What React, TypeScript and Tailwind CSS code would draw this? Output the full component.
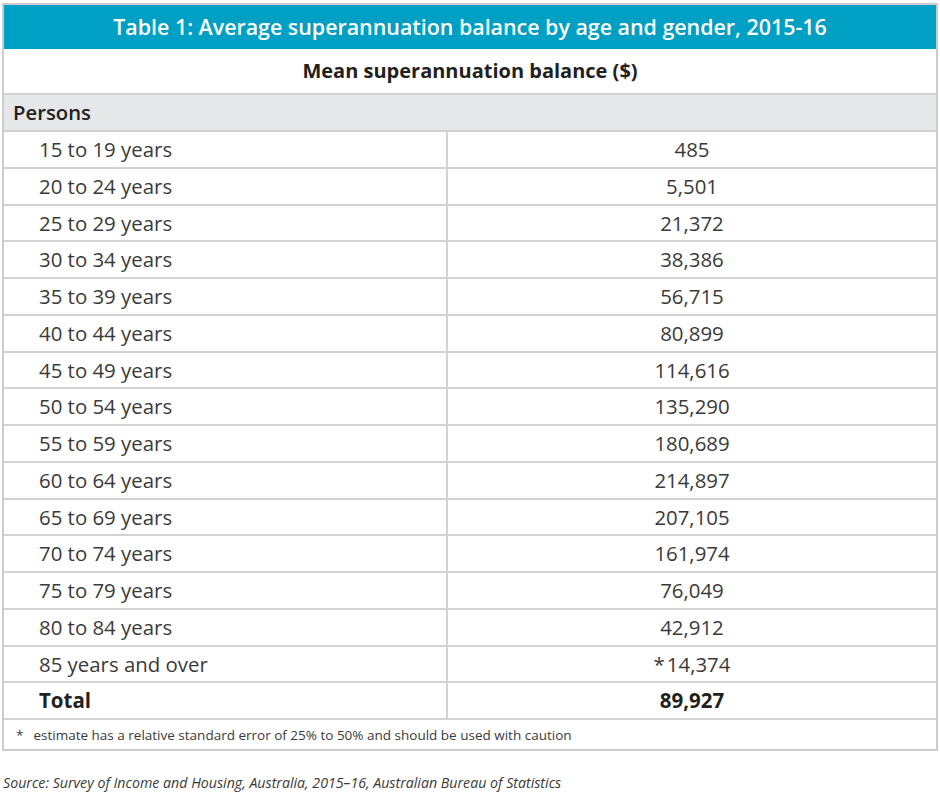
const rows: [string, string][] = [
  ['15 to 19 years', '485'],
  ['20 to 24 years', '5,501'],
  ['25 to 29 years', '21,372'],
  ['30 to 34 years', '38,386'],
  ['35 to 39 years', '56,715'],
  ['40 to 44 years', '80,899'],
  ['45 to 49 years', '114,616'],
  ['50 to 54 years', '135,290'],
  ['55 to 59 years', '180,689'],
  ['60 to 64 years', '214,897'],
  ['65 to 69 years', '207,105'],
  ['70 to 74 years', '161,974'],
  ['75 to 79 years', '76,049'],
  ['80 to 84 years', '42,912'],
  ['85 years and over', '*14,374'],
];

export default function App() {
  return (
    <div className="w-[940px] h-[793px] bg-white text-[#231f20]" style={{ fontFamily: '"Open Sans", "Noto Sans", sans-serif' }}>
      <div className="pl-[2px] pt-[3px]">
        <div className="w-[936px] border-2 border-[#cccccc]">
          {/* title */}
          <div className="h-[44px] bg-[#00a0c4] flex items-center justify-center text-white text-[21.4px] font-semibold">
            Table 1: Average superannuation balance by age and gender, 2015-16
          </div>
          <div className="h-[46px] flex items-center justify-center text-[20px] font-bold border-b-2 border-[#d0d0d0]">
            Mean superannuation balance ($)
          </div>
          <div className="h-[37px] bg-[#e6e7e8] flex items-center pl-[9px] text-[20.3px] font-semibold border-b-2 border-[#d0d0d0]">
            Persons
          </div>

          {rows.map(([label, value]) => (
            <div key={label} className="h-[36.75px] grid grid-cols-[444px_1fr] border-b-2 border-[#d3d3d3] text-[20.4px] text-[#3a3a3a]">
              <div className="flex items-center pl-[35px] border-r-2 border-[#d3d3d3]">{label}</div>
              <div className="flex items-center justify-center">
                {value.startsWith('*') ? (
                  <span><span className="mr-[2px]">*</span>{value.slice(1)}</span>
                ) : value}
              </div>
            </div>
          ))}

          <div className="h-[37px] grid grid-cols-[444px_1fr] border-b-2 border-[#d3d3d3] text-[20.5px] font-bold">
            <div className="flex items-center pl-[35px] border-r-2 border-[#d3d3d3]">Total</div>
            <div className="flex items-center justify-center">89,927</div>
          </div>
          <div className="h-[29px] flex items-center pl-[12px] text-[13.5px] text-[#3a3a3a]">
            <span className="mr-[10px]">*</span>estimate has a relative standard error of 25% to 50% and should be used with caution
          </div>
        </div>
      </div>
      <div className="mt-[22px] pl-[3px] text-[14.2px] leading-[20px] italic text-[#3a3a3a]">
        Source: Survey of Income and Housing, Australia, 2015–16, Australian Bureau of Statistics
      </div>
    </div>
  );
}
